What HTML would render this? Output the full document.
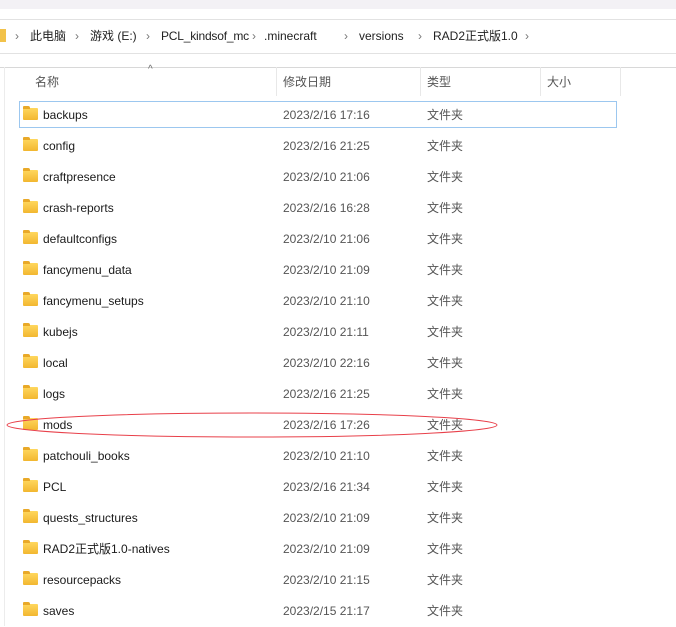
<!DOCTYPE html>
<html><head><meta charset="utf-8"><style>
body{margin:0;width:676px;height:626px;overflow:hidden;background:#fff;font-family:"Liberation Sans","Noto Sans CJK SC",sans-serif;font-size:12px;color:#1a1a1a;position:relative}
.a{position:absolute;white-space:nowrap;line-height:16px}
.row{position:absolute;left:0;width:676px;height:31px;line-height:16px}
.row div{line-height:16px}
.f{position:absolute;left:23px;top:8px;width:15px;height:12px;background:linear-gradient(#ffd75e,#f2b730);border-radius:1px}
.f:before{content:"";position:absolute;left:0;top:-2px;width:7px;height:3px;background:#e9a928;border-radius:1px 2px 0 0}
.n{position:absolute;left:43px;top:7px}
.d{position:absolute;left:283px;top:7px;color:#555}
.t{position:absolute;left:427px;top:7px;color:#555}
.bc{color:#222;font-size:12px}
.ch{color:#777;font-size:12px}
</style></head><body>
<div class="a" style="left:0;top:0;width:676px;height:9px;background:#f3f1f5"></div>
<div class="a" style="left:0;top:19px;width:676px;height:1px;background:#e2e2e2"></div>
<div class="a" style="left:0;top:53px;width:676px;height:1px;background:#e2e2e2"></div>
<div class="a" style="left:0;top:67px;width:676px;height:1px;background:#d8d8d8"></div>
<div class="a" style="left:4px;top:67px;width:1px;height:559px;background:#ececec"></div>
<div class="a" style="left:0;top:29px;width:6px;height:13px;background:#f2c24a"></div>
<div class="a ch" style="left:15px;top:28px">›</div>
<div class="a bc" style="left:30px;top:28px">此电脑</div>
<div class="a ch" style="left:75px;top:28px">›</div>
<div class="a bc" style="left:90px;top:28px">游戏 (E:)</div>
<div class="a ch" style="left:146px;top:28px">›</div>
<div class="a bc" style="left:161px;top:28px;letter-spacing:-0.2px">PCL_kindsof_mc</div>
<div class="a ch" style="left:252px;top:28px">›</div>
<div class="a bc" style="left:264px;top:28px">.minecraft</div>
<div class="a ch" style="left:344px;top:28px">›</div>
<div class="a bc" style="left:359px;top:28px">versions</div>
<div class="a ch" style="left:418px;top:28px">›</div>
<div class="a bc" style="left:433px;top:28px">RAD2正式版1.0</div>
<div class="a ch" style="left:525px;top:28px">›</div>
<div class="a" style="left:148px;top:62px;font-size:10px;color:#666">^</div>
<div class="a" style="left:35px;top:74px;color:#555">名称</div>
<div class="a" style="left:283px;top:74px;color:#555">修改日期</div>
<div class="a" style="left:427px;top:74px;color:#555">类型</div>
<div class="a" style="left:547px;top:74px;color:#555">大小</div>
<div class="a" style="left:276px;top:67px;width:1px;height:29px;background:#e8e8e8"></div>
<div class="a" style="left:420px;top:67px;width:1px;height:29px;background:#e8e8e8"></div>
<div class="a" style="left:540px;top:67px;width:1px;height:29px;background:#e8e8e8"></div>
<div class="a" style="left:620px;top:67px;width:1px;height:29px;background:#e8e8e8"></div>
<div class="a" style="left:19px;top:101px;width:596px;height:25px;border:1px solid #9cc7ef"></div>
<div class="row" style="top:100px"><div class="f"></div><div class="n">backups</div><div class="d">2023/2/16 17:16</div><div class="t">文件夹</div></div>
<div class="row" style="top:131px"><div class="f"></div><div class="n">config</div><div class="d">2023/2/16 21:25</div><div class="t">文件夹</div></div>
<div class="row" style="top:162px"><div class="f"></div><div class="n">craftpresence</div><div class="d">2023/2/10 21:06</div><div class="t">文件夹</div></div>
<div class="row" style="top:193px"><div class="f"></div><div class="n">crash-reports</div><div class="d">2023/2/16 16:28</div><div class="t">文件夹</div></div>
<div class="row" style="top:224px"><div class="f"></div><div class="n">defaultconfigs</div><div class="d">2023/2/10 21:06</div><div class="t">文件夹</div></div>
<div class="row" style="top:255px"><div class="f"></div><div class="n">fancymenu_data</div><div class="d">2023/2/10 21:09</div><div class="t">文件夹</div></div>
<div class="row" style="top:286px"><div class="f"></div><div class="n">fancymenu_setups</div><div class="d">2023/2/10 21:10</div><div class="t">文件夹</div></div>
<div class="row" style="top:317px"><div class="f"></div><div class="n">kubejs</div><div class="d">2023/2/10 21:11</div><div class="t">文件夹</div></div>
<div class="row" style="top:348px"><div class="f"></div><div class="n">local</div><div class="d">2023/2/10 22:16</div><div class="t">文件夹</div></div>
<div class="row" style="top:379px"><div class="f"></div><div class="n">logs</div><div class="d">2023/2/16 21:25</div><div class="t">文件夹</div></div>
<div class="row" style="top:410px"><div class="f"></div><div class="n">mods</div><div class="d">2023/2/16 17:26</div><div class="t">文件夹</div></div>
<div class="row" style="top:441px"><div class="f"></div><div class="n">patchouli_books</div><div class="d">2023/2/10 21:10</div><div class="t">文件夹</div></div>
<div class="row" style="top:472px"><div class="f"></div><div class="n">PCL</div><div class="d">2023/2/16 21:34</div><div class="t">文件夹</div></div>
<div class="row" style="top:503px"><div class="f"></div><div class="n">quests_structures</div><div class="d">2023/2/10 21:09</div><div class="t">文件夹</div></div>
<div class="row" style="top:534px"><div class="f"></div><div class="n">RAD2正式版1.0-natives</div><div class="d">2023/2/10 21:09</div><div class="t">文件夹</div></div>
<div class="row" style="top:565px"><div class="f"></div><div class="n">resourcepacks</div><div class="d">2023/2/10 21:15</div><div class="t">文件夹</div></div>
<div class="row" style="top:596px"><div class="f"></div><div class="n">saves</div><div class="d">2023/2/15 21:17</div><div class="t">文件夹</div></div>
<svg class="a" style="left:0;top:0" width="676" height="626"><ellipse cx="252" cy="425" rx="245" ry="12" fill="none" stroke="#e8404a" stroke-width="1"/></svg>
</body></html>
